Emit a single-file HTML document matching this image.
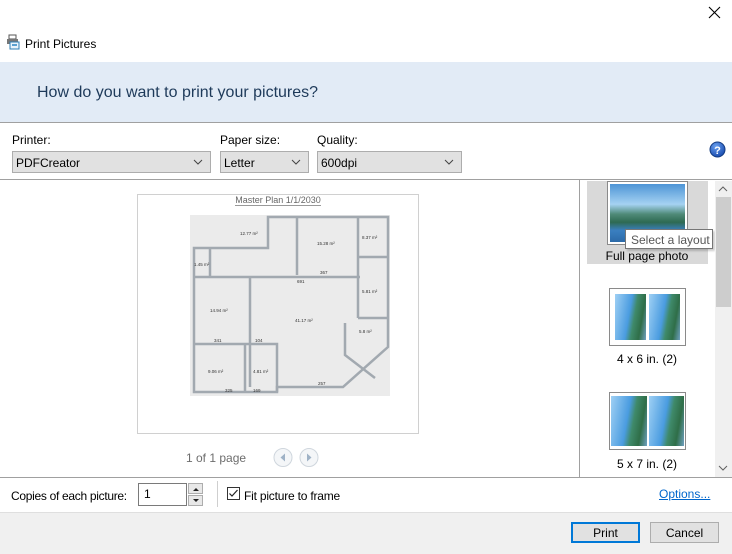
<!DOCTYPE html>
<html><head><meta charset="utf-8"><style>
*{margin:0;padding:0;box-sizing:border-box}
body{width:732px;height:554px;position:relative;background:#fff;font-family:"Liberation Sans",sans-serif;font-size:12px;color:#000;overflow:hidden}
.a{position:absolute}
.dd{position:absolute;top:151px;height:22px;background:#e1e1e1;border:1px solid #adadad;padding:4px 0 0 3px;font-size:12px}
.dd svg{position:absolute;right:7px;top:7px}
.lbl{position:absolute;top:133px;font-size:12px}
.thumb2{position:absolute;border:1px solid #8a8a8a;background:#fff;display:flex;gap:3px;padding:5px}
.tp{flex:1;background:linear-gradient(100deg,#9fd0f4 0%,#4a9ce0 45%,#3f8a6a 60%,#2f6e48 80%,#6fa0c0 100%)}
.cap{position:absolute;width:120px;text-align:center;font-size:12px}
.btn{position:absolute;top:522px;width:69px;height:21px;background:#e1e1e1;border:1px solid #adadad;text-align:center;font-size:12px;padding-top:3px}
</style></head><body>
<svg class="a" style="left:708px;top:6px" width="13" height="13"><path d="M1 1L12 12M12 1L1 12" stroke="#000" stroke-width="1.1"/></svg>
<svg class="a" style="left:6px;top:34px" width="14" height="16"><rect x="3" y="1" width="7" height="4" fill="#fff" stroke="#555"/><rect x="1" y="5" width="11" height="5" fill="#777"/><rect x="4" y="8" width="9" height="7" fill="#eaf4fb" stroke="#2f7fb5"/><rect x="6" y="10" width="5" height="2" fill="#5aa0d0"/></svg>
<div class="a" style="left:25px;top:37px;font-size:12px">Print Pictures</div>
<div class="a" style="left:0;top:62px;width:732px;height:61px;background:#e2ebf6;border-bottom:1px solid #a0a0a0"></div>
<div class="a" style="left:37px;top:84px;font-size:16px;color:#1e3a5a">How do you want to print your pictures?</div>
<div class="lbl" style="left:12px">Printer:</div>
<div class="lbl" style="left:220px">Paper size:</div>
<div class="lbl" style="left:317px">Quality:</div>
<div class="dd" style="left:12px;width:199px">PDFCreator<svg width="10" height="6"><path d="M1 1L5 5L9 1" stroke="#444" fill="none"/></svg></div>
<div class="dd" style="left:220px;width:89px">Letter<svg width="10" height="6"><path d="M1 1L5 5L9 1" stroke="#444" fill="none"/></svg></div>
<div class="dd" style="left:317px;width:145px">600dpi<svg width="10" height="6"><path d="M1 1L5 5L9 1" stroke="#444" fill="none"/></svg></div>
<svg class="a" style="left:709px;top:141px" width="17" height="17"><defs><radialGradient id="g" cx="40%" cy="30%" r="70%"><stop offset="0" stop-color="#6aa0f0"/><stop offset="1" stop-color="#1a4db0"/></radialGradient></defs><circle cx="8.5" cy="8.5" r="7.5" fill="url(#g)" stroke="#123a80"/><text x="8.5" y="13" text-anchor="middle" font-family="Liberation Sans" font-weight="bold" font-size="11" fill="#fff">?</text></svg>
<div class="a" style="left:0;top:179px;width:732px;height:1px;background:#a0a0a0"></div>
<div class="a" style="left:137px;top:194px;width:282px;height:240px;border:1px solid #d0d0d0;background:#fff"></div>
<div class="a" style="left:137px;top:195px;width:282px;text-align:center;font-size:9px;color:#666"><span style="border-bottom:1px solid #999">Master Plan 1/1/2030</span></div>
<svg class="a" style="left:190px;top:215px" width="200" height="181" viewBox="0 0 200 181">
<rect width="200" height="181" fill="#ebebeb"/>
<g fill="none" stroke="#a2a9b0" stroke-width="2.5">
<path d="M4 33H78V2H198V132L153 172H87V177H4Z"/>
<path d="M20 33V62M4 62H170M107 2V60M168 2V103M168 42H198M168 103H198M60 62V172M4 129H87V177M55 129V177M87 172V129"/>
<path d="M155 108V140L185 163"/>
</g>
<g font-family="Liberation Sans" font-size="4.5" fill="#333"><text x="50" y="20">12.77 m²</text><text x="127" y="30">15.28 m²</text><text x="20" y="97">14.94 m²</text><text x="105" y="107">41.17 m²</text><text x="172" y="78">5.81 m²</text><text x="169" y="118">5.8 m²</text><text x="18" y="158">9.06 m²</text><text x="63" y="158">4.81 m²</text><text x="172" y="24">8.37 m²</text><text x="4" y="51">1.45 m²</text>
<text x="107" y="68">691</text><text x="130" y="59">367</text><text x="24" y="127">341</text><text x="65" y="127">104</text><text x="35" y="177">325</text><text x="63" y="177">169</text><text x="128" y="170">257</text></g>
</svg>
<div class="a" style="left:186px;top:451px;font-size:12px;color:#6d6d6d">1 of 1 page</div>
<svg class="a" style="left:273px;top:447px" width="47" height="21"><circle cx="10" cy="10.5" r="9" fill="#f4f6f8" stroke="#cfd6dd"/><circle cx="36" cy="10.5" r="9" fill="#f4f6f8" stroke="#cfd6dd"/><path d="M12 6.5L7.5 10.5L12 14.5Z" fill="#9fb2c6"/><path d="M34 6.5L38.5 10.5L34 14.5Z" fill="#9fb2c6"/></svg>
<div class="a" style="left:579px;top:180px;width:1px;height:297px;background:#a0a0a0"></div>
<div class="a" style="left:587px;top:181px;width:121px;height:83px;background:#d9d9d9"></div>
<div class="a" style="left:608px;top:182px;width:79px;height:62px;border:2px solid #fff;outline:1px solid #8a8a8a;background:linear-gradient(180deg,#4d95d6 0%,#a5d2f2 35%,#4f8a78 52%,#2e6a52 66%,#3a7fc0 80%,#2c6aa8 100%)"></div>
<div class="a" style="left:625px;top:229px;width:88px;height:20px;background:#fff;border:1px solid #767676;box-shadow:2px 2px 2px rgba(0,0,0,.2);font-size:12px;color:#575757;padding:3px 0 0 5px">Select a layout</div>
<div class="cap" style="left:587px;top:249px">Full page photo</div>
<div class="thumb2" style="left:609px;top:288px;width:77px;height:58px"><div class="tp"></div><div class="tp"></div></div>
<div class="cap" style="left:587px;top:352px">4 x 6 in. (2)</div>
<div class="thumb2" style="left:609px;top:392px;width:77px;height:58px;padding:3px 1px;gap:2px"><div class="tp"></div><div class="tp"></div></div>
<div class="cap" style="left:587px;top:457px">5 x 7 in. (2)</div>
<div class="a" style="left:715px;top:181px;width:17px;height:296px;background:#f0f0f0"></div>
<div class="a" style="left:716px;top:197px;width:15px;height:110px;background:#cdcdcd"></div>
<svg class="a" style="left:718px;top:186px" width="10" height="6"><path d="M1 5L5 1L9 5" stroke="#606060" fill="none"/></svg>
<svg class="a" style="left:718px;top:465px" width="10" height="6"><path d="M1 1L5 5L9 1" stroke="#606060" fill="none"/></svg>
<div class="a" style="left:0;top:477px;width:732px;height:1px;background:#a0a0a0"></div>
<div class="a" style="left:11px;top:489px;font-size:12px;letter-spacing:-0.3px">Copies of each picture:</div>
<div class="a" style="left:138px;top:483px;width:49px;height:23px;border:1px solid #7a7a7a;padding:3px 0 0 5px;font-size:12px">1</div>
<div class="a" style="left:188px;top:483px;width:15px;height:11px;background:#e8e8e8;border:1px solid #adadad"></div>
<div class="a" style="left:188px;top:495px;width:15px;height:11px;background:#e8e8e8;border:1px solid #adadad"></div>
<svg class="a" style="left:192px;top:486px" width="8" height="18"><path d="M1 5L4 2L7 5Z M1 13L4 16L7 13Z" fill="#222"/></svg>
<div class="a" style="left:217px;top:481px;width:1px;height:26px;background:#cfcfcf"></div>
<svg class="a" style="left:227px;top:487px" width="13" height="13"><rect x="0.5" y="0.5" width="12" height="12" fill="#fff" stroke="#333"/><path d="M2.5 6.5L5 9L10.5 3" stroke="#222" stroke-width="1.2" fill="none"/></svg>
<div class="a" style="left:244px;top:489px;font-size:12px;letter-spacing:-0.2px">Fit picture to frame</div>
<div class="a" style="left:659px;top:487px;font-size:12px;color:#0066cc;text-decoration:underline">Options...</div>
<div class="a" style="left:0;top:512px;width:732px;height:42px;background:#f0f0f0;border-top:1px solid #dfdfdf"></div>
<div class="btn" style="left:571px;border:2px solid #0078d7;padding-top:2px">Print</div>
<div class="btn" style="left:650px">Cancel</div>
</body></html>
